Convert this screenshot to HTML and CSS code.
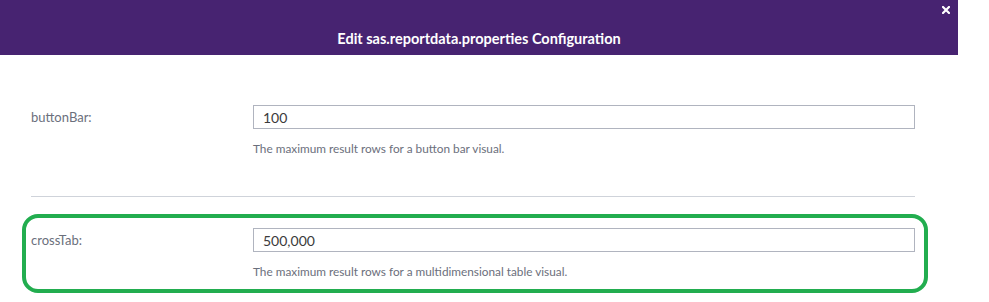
FILE: index.html
```html
<!DOCTYPE html>
<html lang="en">
<head>
    <meta charset="UTF-8">
    <title>Edit sas.reportdata.properties Configuration</title>
    <link rel="stylesheet" href="styles.css">
</head>
<body>

<div class="dialog">
    <div class="dialog-header">
        <button class="close-button" title="Close">
            <svg width="8" height="8" viewBox="0 0 8 8">
                <path d="M1 1 L7 7 M7 1 L1 7" stroke="#fff" stroke-width="2.2" stroke-linecap="square"/>
            </svg>
        </button>
        <h1>Edit sas.reportdata.properties Configuration</h1>
    </div>

    <div class="dialog-body">
        <div class="field first">
            <label for="buttonBar">buttonBar:</label>
            <div class="field-input">
                <input type="text" id="buttonBar" value="100">
                <p class="help">The maximum result rows for a button bar visual.</p>
            </div>
        </div>

        <!-- highlighted property -->
        <div class="highlight">
            <div class="field">
                <label for="crossTab">crossTab:</label>
                <div class="field-input">
                    <input type="text" id="crossTab" value="500,000">
                    <p class="help">The maximum result rows for a multidimensional table visual.</p>
                </div>
            </div>
        </div>
    </div>
</div>

</body>
</html>
```

FILE: styles.css
```css
body {
    font-family: Lato, "Open Sans", sans-serif;
    background-color: #fff;
    margin: 0;
}
.dialog {
    width: 958px;
}
.dialog-header {
    height: 55px;
    background-color: #472371;
    color: #fff;
    display: flex;
    flex-direction: column;
    box-sizing: border-box;
    padding: 6px 8px 0;
}
.close-button {
    align-self: flex-end;
    background: none;
    border: none;
    padding: 0;
    width: 8px;
    height: 8px;
    display: flex;
    cursor: pointer;
}
.dialog-header h1 {
    margin: 17px 0 0;
    font-size: 14.5px;
    line-height: 16px;
    font-weight: bold;
    text-align: center;
}
.dialog-body {
    padding: 50px 43px 0 31px;
}
.field {
    display: grid;
    grid-template-columns: 222px 1fr;
}
.field.first {
    padding-bottom: 40px;
    border-bottom: 1px solid #cfd3da;
}
label {
    font-size: 13px;
    line-height: 24px;
    color: #6b6f7c;
}
input[type="text"] {
    display: block;
    width: 100%;
    box-sizing: border-box;
    height: 24px;
    margin: 0;
    padding: 0 9px;
    border: 1px solid #b0b4bf;
    border-radius: 0;
    font-family: Lato, sans-serif;
    font-size: 14px;
    color: #3b3b3b;
}
.help {
    margin: 13px 0 0;
    font-size: 11.8px;
    line-height: 14px;
    color: #6b6f7c;
}
.highlight {
    margin: 17px -13px 0 -9px;
    border: 4px solid #22ad4f;
    border-radius: 16px;
    padding: 10px 9px 10px 5px;
}
```
